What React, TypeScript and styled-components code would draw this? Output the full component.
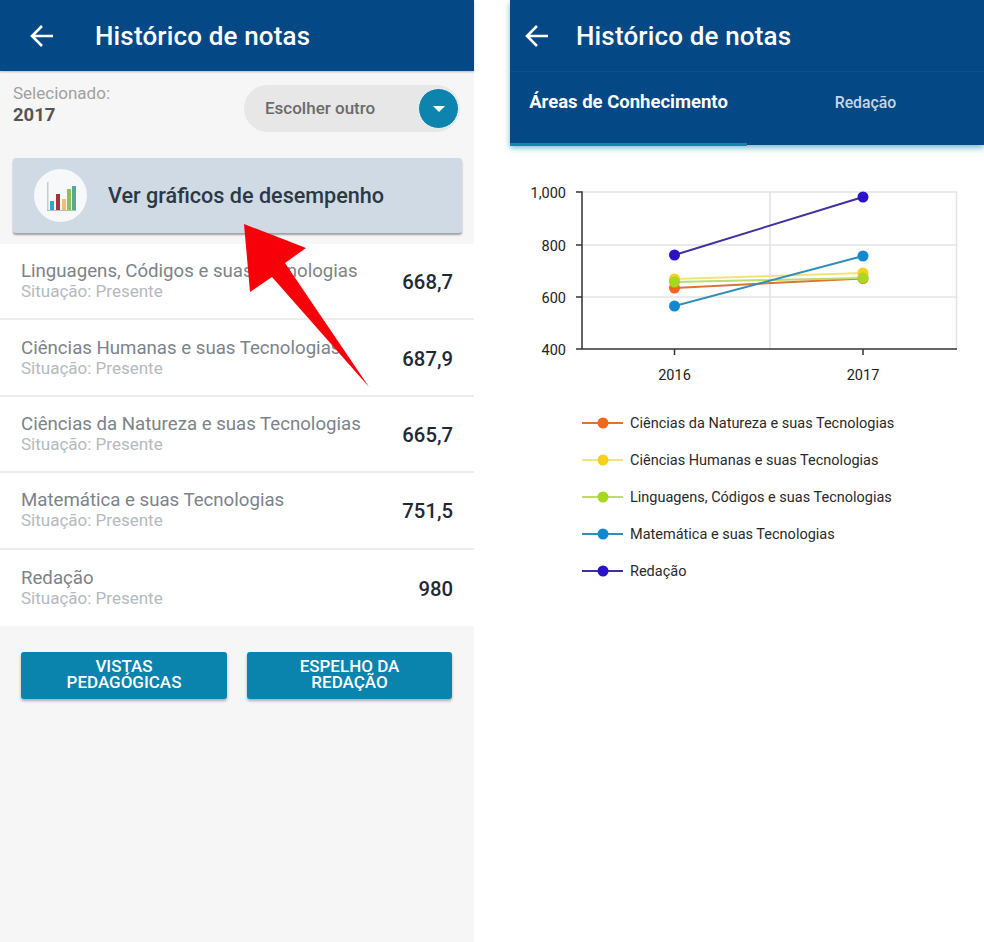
import React from "react";
import styled, { createGlobalStyle } from "styled-components";

const Global = createGlobalStyle`
  html, body { margin: 0; padding: 0; background: #fff; }
  body { font-family: Roboto, "Liberation Sans", sans-serif; }
  * { box-sizing: border-box; }
`;

const Page = styled.div`
  position: relative;
  width: 984px;
  height: 942px;
  display: flex;
  gap: 36px;
  overflow: hidden;
  background: #fff;
`;
const Phone = styled.div<{ $bg: string }>`
  width: 474px;
  height: 942px;
  background: ${(p) => p.$bg};
  display: flex;
  flex-direction: column;
`;
const AppBar = styled.header<{ $pad: number; $gap: number }>`
  height: 71px;
  flex: none;
  background: #044886;
  display: flex;
  align-items: center;
  padding-left: ${(p) => p.$pad}px;
  gap: ${(p) => p.$gap}px;
  color: #fff;
`;
const ShadowBar = styled(AppBar)`
  box-shadow: 0 1px 2px rgba(0, 0, 0, 0.25);
`;
const Title = styled.h1`
  margin: 0;
  font-size: 26px;
  font-weight: 500;
  letter-spacing: 0.15px;
  line-height: 30px;
`;
const SelectRow = styled.div`
  height: 87px;
  flex: none;
  display: flex;
  justify-content: space-between;
  padding: 13px 14px 0 13px;
`;
const Selected = styled.div`
  display: flex;
  flex-direction: column;
`;
const SelectedLabel = styled.span`
  font-size: 17px;
  line-height: 19px;
  color: #a0a0a0;
`;
const SelectedYear = styled.span`
  font-size: 18.5px;
  line-height: 21px;
  margin-top: 2px;
  font-weight: 700;
  color: #555;
`;
const Pill = styled.div`
  width: 216px;
  height: 47px;
  margin-top: 1px;
  border-radius: 24px;
  background: #e7e7e7;
  display: flex;
  align-items: center;
  justify-content: space-between;
  padding: 0 1px 0 21px;
  font-size: 17px;
  font-weight: 500;
  color: #6b6b6b;
`;
const PillLabel = styled.span`
  margin-bottom: 2px;
`;
const PillButton = styled.span`
  width: 41px;
  height: 41px;
  border-radius: 50%;
  background: #0c84ae;
  border: 1px solid #f2f6f8;
  display: flex;
  align-items: center;
  justify-content: center;
`;
const PillCaret = styled.span`
  width: 0;
  height: 0;
  border-left: 6px solid transparent;
  border-right: 6px solid transparent;
  border-top: 6px solid #fff;
`;
const GraphCard = styled.div`
  margin: 0 12px 0 13px;
  height: 75px;
  flex: none;
  background: #cfdae4;
  border-radius: 3px;
  box-shadow: 0 2px 2px rgba(0, 0, 0, 0.35);
  display: flex;
  align-items: center;
  padding-left: 21px;
  gap: 21px;
  font-size: 21.6px;
  font-weight: 500;
  color: #2b3845;
`;
const IconDisc = styled.span`
  width: 53px;
  height: 53px;
  border-radius: 50%;
  background: #f6f8f9;
  display: flex;
  align-items: center;
  justify-content: center;
`;
const ScoreList = styled.div`
  margin-top: 11px;
  background: #fff;
  flex: none;
`;
const ScoreRow = styled.div`
  height: 76.4px;
  padding: 0 21px;
  display: flex;
  align-items: center;
  justify-content: space-between;
  border-bottom: 2px solid #ececec;
  &:last-child { border-bottom: none; }
`;
const ScoreText = styled.div`
  display: flex;
  flex-direction: column;
`;
const ScoreName = styled.span`
  font-size: 18.65px;
  line-height: 20px;
  color: #7d8389;
`;
const ScoreStatus = styled.span`
  font-size: 17px;
  line-height: 20px;
  color: #b4babf;
`;
const ScoreValue = styled.span`
  font-size: 20.3px;
  font-weight: 500;
  color: #1f2935;
  padding-top: 2px;
`;
const Actions = styled.div`
  display: flex;
  justify-content: space-between;
  padding: 26px 22px 0 21px;
`;
const ActionButton = styled.button<{ $w: number }>`
  width: ${(p) => p.$w}px;
  height: 47px;
  border: none;
  border-radius: 3px;
  background: #0a83ad;
  box-shadow: 0 2px 3px rgba(0, 0, 0, 0.3);
  color: #fff;
  font-family: inherit;
  font-size: 17px;
  line-height: 16px;
  font-weight: 500;
  text-transform: uppercase;
  padding: 0 20px 2px;
`;
const TabsHead = styled.div`
  flex: none;
  background: #044886;
  box-shadow: 0 3px 6px rgba(20, 130, 170, 0.55);
`;
const Tabs = styled.div`
  height: 74px;
  display: flex;
  border-top: 1px solid #0d4f8b;
`;
const Tab = styled.div<{ $active?: boolean }>`
  width: 50%;
  display: flex;
  justify-content: center;
  padding-top: ${(p) => (p.$active ? "18px" : "19px")};
  height: 74px;
  line-height: 24px;
  font-weight: ${(p) => (p.$active ? 700 : 500)};
  font-size: ${(p) => (p.$active ? "18.5px" : "15.8px")};
  color: ${(p) => (p.$active ? "#fff" : "#c6d6e6")};
  border-bottom: 3px solid ${(p) => (p.$active ? "#1189ad" : "transparent")};
`;
const ChartWrap = styled.div`
  margin-top: 29px;
  flex: none;
  display: block;
`;
const ChartLabel = styled.text`
  font-family: Roboto, "Liberation Sans", sans-serif;
  font-size: 14.5px;
  font-weight: 400;
  fill: #222;
`;
const Legend = styled.ul`
  list-style: none;
  margin: 18px 0 0;
  padding: 0 0 0 72px;
  display: flex;
  flex-direction: column;
  gap: 15px;
`;
const LegendItem = styled.li`
  height: 22px;
  display: flex;
  align-items: center;
  gap: 7px;
  font-size: 14.5px;
  color: #2a2a2a;
`;
const Overlay = styled.svg`
  position: absolute;
  left: 0;
  top: 0;
  pointer-events: none;
`;

const BackArrow = () => (
  <svg width="24" height="24" viewBox="0 0 24 24" fill="none" stroke="#fff" strokeWidth="2.6">
    <path d="M23 12H2M12 2 2 12l10 10" />
  </svg>
);

const BarsIcon = () => (
  <svg width="32" height="32" viewBox="0 0 32 32">
    <rect x="2" y="2" width="1.5" height="29" fill="#c9c9cf" />
    <rect x="2" y="30" width="29" height="1" fill="#b8bcc0" />
    <rect x="5" y="21" width="4" height="9" fill="#2fa7c9" />
    <rect x="11" y="14" width="4" height="16" fill="#a8323a" />
    <rect x="17" y="19" width="4" height="11" fill="#f0bd73" />
    <rect x="22" y="9" width="4" height="21" fill="#8fbf57" />
    <rect x="27" y="6" width="4" height="24" fill="#5aa890" />
  </svg>
);

const scores = [
  ["Linguagens, Códigos e suas Tecnologias", "668,7"],
  ["Ciências Humanas e suas Tecnologias", "687,9"],
  ["Ciências da Natureza e suas Tecnologias", "665,7"],
  ["Matemática e suas Tecnologias", "751,5"],
  ["Redação", "980"],
];

const series = [
  { name: "Ciências da Natureza e suas Tecnologias", color: "#f4661b", line: "#d9762f", y1: 288, y2: 278.5 },
  { name: "Ciências Humanas e suas Tecnologias", color: "#f7cf1d", line: "#f3e27c", y1: 279, y2: 273 },
  { name: "Linguagens, Códigos e suas Tecnologias", color: "#a9d71f", line: "#bcdc6c", y1: 282, y2: 278 },
  { name: "Matemática e suas Tecnologias", color: "#1388d0", line: "#2f8fb5", y1: 306, y2: 256 },
  { name: "Redação", color: "#2a12c8", line: "#41309f", y1: 255, y2: 197 },
];

const LegendMark = ({ color, line }: { color: string; line: string }) => (
  <svg width="41" height="12" viewBox="0 0 41 12">
    <line x1="0" y1="6" x2="41" y2="6" stroke={line} strokeWidth="2" />
    <circle cx="21" cy="6" r="5.5" fill={color} />
  </svg>
);

/* Chart svg spans x 510..984, y 174..390 of the page */
const Chart = () => {
  const ox = 510;
  const oy = 174;
  const X = (x: number) => x - ox;
  const Y = (y: number) => y - oy;
  return (
    <svg width="474" height="216" viewBox="0 0 474 216">
      {[192, 245, 297].map((y) => (
        <line key={y} x1={X(582)} x2={X(957)} y1={Y(y)} y2={Y(y)} stroke="#e3e3e3" strokeWidth="1.6" />
      ))}
      <line x1={X(770)} x2={X(770)} y1={Y(192)} y2={Y(349)} stroke="#e3e3e3" strokeWidth="1.6" />
      <line x1={X(956.5)} x2={X(956.5)} y1={Y(192)} y2={Y(349)} stroke="#e3e3e3" strokeWidth="1.6" />
      <path
        d={`M${X(576)} ${Y(192)}H${X(582)}V${Y(349)}H${X(957)}M${X(576)} ${Y(245)}H${X(582)}M${X(576)} ${Y(297)}H${X(582)}M${X(576)} ${Y(349)}H${X(582)}M${X(674.5)} ${Y(349)}V${Y(355)}M${X(863)} ${Y(349)}V${Y(355)}`}
        fill="none"
        stroke="#333"
        strokeWidth="1.5"
      />
      {[["1,000", 192], ["800", 245], ["600", 297], ["400", 349]].map(([t, y]) => (
        <ChartLabel key={t as string} x={X(566)} y={Y(y as number) + 6} textAnchor="end">
          {t}
        </ChartLabel>
      ))}
      <ChartLabel x={X(674.5)} y={Y(380)} textAnchor="middle">2016</ChartLabel>
      <ChartLabel x={X(863)} y={Y(380)} textAnchor="middle">2017</ChartLabel>
      {series.map((s) => (
        <g key={s.name}>
          <line x1={X(674.5)} y1={Y(s.y1)} x2={X(863)} y2={Y(s.y2)} stroke={s.line} strokeWidth="2" />
          <circle cx={X(674.5)} cy={Y(s.y1)} r="5.5" fill={s.color} />
          <circle cx={X(863)} cy={Y(s.y2)} r="5.5" fill={s.color} />
        </g>
      ))}
    </svg>
  );
};

export default function App() {
  return (
    <Page>
      <Global />
      <Phone $bg="#f6f6f6">
        <ShadowBar $pad={30} $gap={41}>
          <BackArrow />
          <Title>Histórico de notas</Title>
        </ShadowBar>
        <SelectRow>
          <Selected>
            <SelectedLabel>Selecionado:</SelectedLabel>
            <SelectedYear>2017</SelectedYear>
          </Selected>
          <Pill>
            <PillLabel>Escolher outro</PillLabel>
            <PillButton>
              <PillCaret />
            </PillButton>
          </Pill>
        </SelectRow>
        <GraphCard>
          <IconDisc>
            <BarsIcon />
          </IconDisc>
          Ver gráficos de desempenho
        </GraphCard>
        <ScoreList>
          {scores.map(([name, value]) => (
            <ScoreRow key={name}>
              <ScoreText>
                <ScoreName>{name}</ScoreName>
                <ScoreStatus>Situação: Presente</ScoreStatus>
              </ScoreText>
              <ScoreValue>{value}</ScoreValue>
            </ScoreRow>
          ))}
        </ScoreList>
        <Actions>
          <ActionButton $w={206}>Vistas pedagógicas</ActionButton>
          <ActionButton $w={205}>Espelho da redação</ActionButton>
        </Actions>
      </Phone>
      <Phone $bg="#fff">
        <TabsHead>
          <AppBar $pad={15} $gap={27}>
            <BackArrow />
            <Title>Histórico de notas</Title>
          </AppBar>
          <Tabs>
            <Tab $active>Áreas de Conhecimento</Tab>
            <Tab>Redação</Tab>
          </Tabs>
        </TabsHead>
        <ChartWrap>
          <Chart />
        </ChartWrap>
        <Legend>
          {series.map((s) => (
            <LegendItem key={s.name}>
              <LegendMark color={s.color} line={s.line} />
              {s.name}
            </LegendItem>
          ))}
        </Legend>
      </Phone>
      <Overlay width="984" height="942" viewBox="0 0 984 942">
        <polygon points="244,224 306,248 285,263 369,387 272,277 250,292" fill="#f8000a" />
      </Overlay>
    </Page>
  );
}
